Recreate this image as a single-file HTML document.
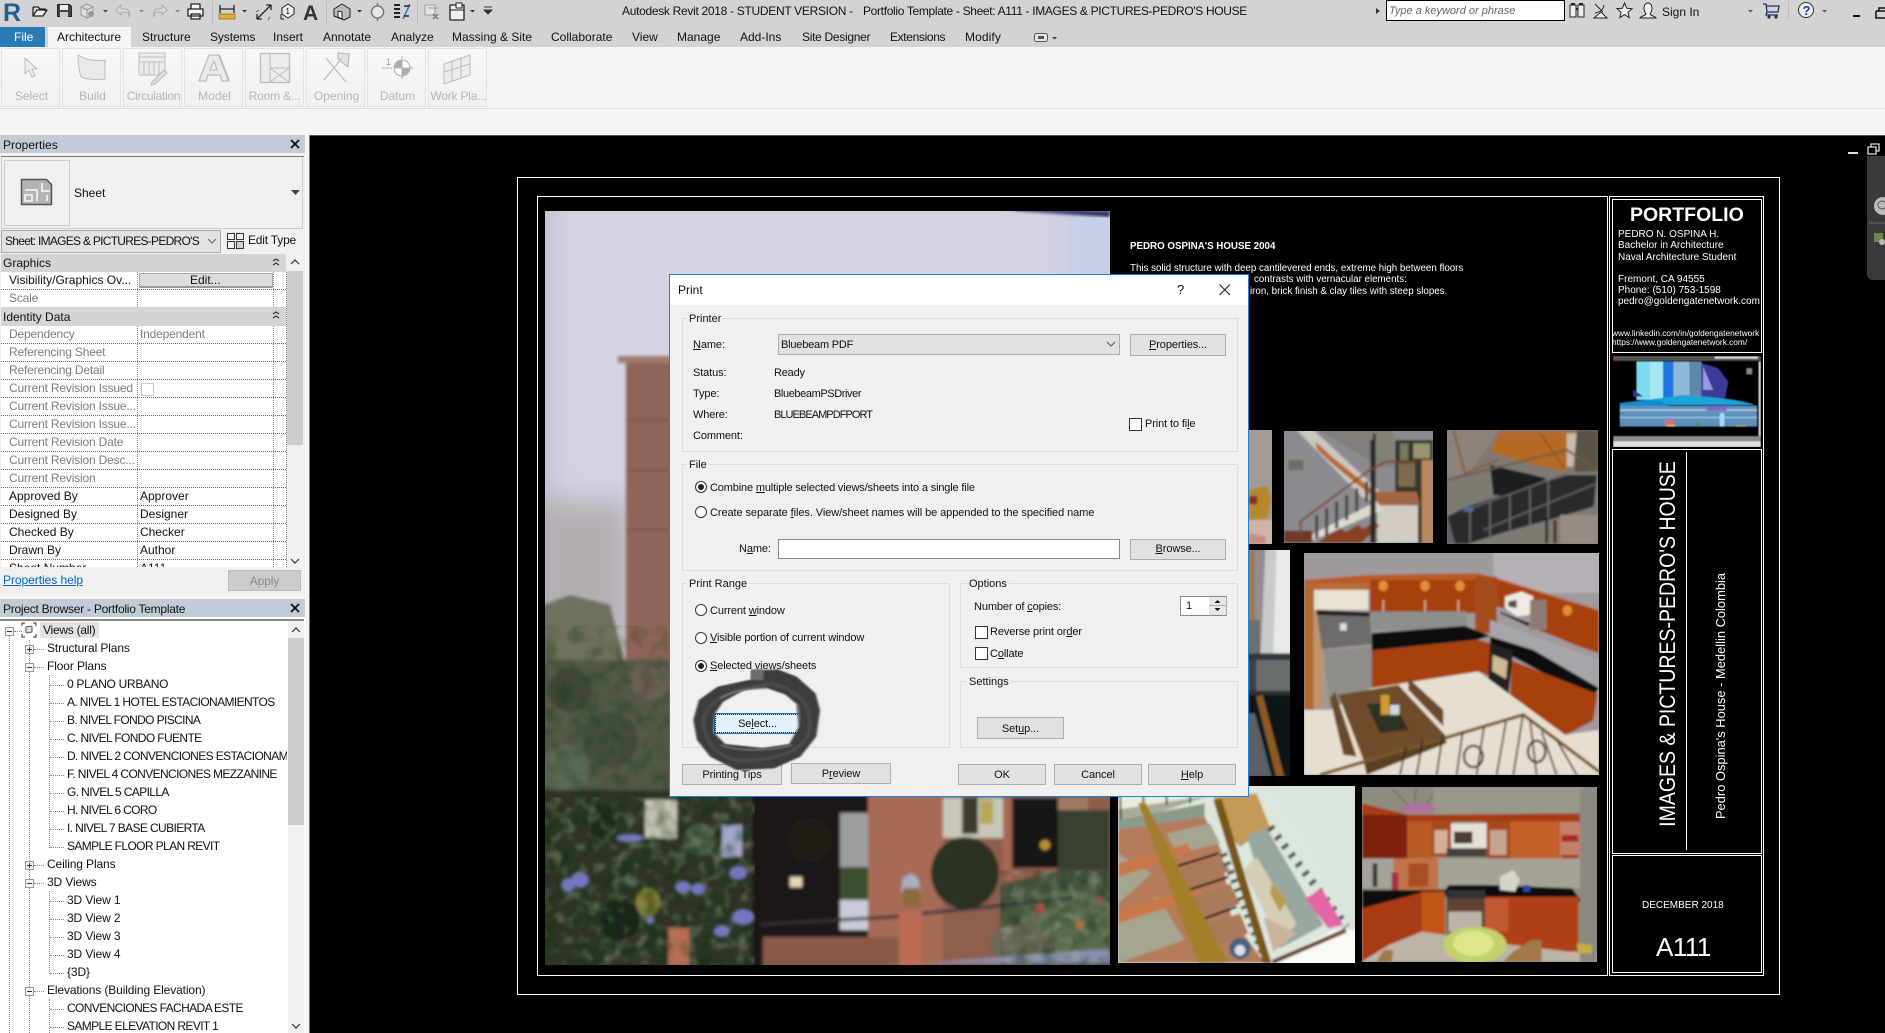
<!DOCTYPE html>
<html><head><meta charset="utf-8"><title>Revit Print Dialog</title>
<style>
html,body{margin:0;padding:0;background:#000}
#p{position:relative;width:1885px;height:1033px;overflow:hidden;background:#000;font:12px "Liberation Sans",sans-serif;color:#111}
#p div,#p span.a,#p svg.a{position:absolute}
.t{position:absolute;white-space:nowrap;line-height:16px;height:16px}
.g{color:#b5b5b5;text-align:center;width:59px;top:88px}
.rb{position:absolute;top:48px;width:59px;height:59px;box-sizing:border-box;border:1px solid #e2e2e2;background:linear-gradient(#f7f7f7,#f1f1f1)}
.hd{background:#bfcddb;left:0;width:305px;height:18px}
.sec{left:1px;width:285px;height:18px;background:#d4d4d4}
.l{border-bottom:1px dotted #666;left:1px;width:285px;height:17px}
.d{color:#7d7d7d;letter-spacing:-.18px}
.tb{font-size:12px}
.b{position:absolute;box-sizing:border-box;background:#e1e1e1;border:1px solid #adadad;text-align:center;font-size:11px;letter-spacing:-.1px;white-space:nowrap}
.dl{font-size:11px;letter-spacing:-.12px}
.gb{position:absolute;box-sizing:border-box;border:1px solid #dcdcdc}
.lg{position:absolute;background:#f0f0f0;padding:0 2px;font-size:11px;line-height:14px;white-space:nowrap}
.rd{position:absolute;width:12px;height:12px;box-sizing:border-box;border:1px solid #333;border-radius:50%;background:#fff}
.rd.on:after{content:"";position:absolute;left:2px;top:2px;width:6px;height:6px;border-radius:50%;background:#222}
.cb{position:absolute;width:13px;height:13px;box-sizing:border-box;border:1px solid #333;background:#fff}
.w{position:absolute;border:1px solid #fff;box-sizing:border-box}
.sw{color:#fff;font-size:10px}
.e{position:absolute;width:9px;height:9px;box-sizing:border-box;border:1px solid #999;background:#f4f4f4}
.e:before{content:"";position:absolute;left:1px;top:3px;width:5px;height:1px;background:#333}
.e.p:after{content:"";position:absolute;left:3px;top:1px;width:1px;height:5px;background:#333}
.tr{font-size:12px;letter-spacing:-.12px}
.up{font-size:12px;letter-spacing:-.62px}
.h{position:absolute;border-top:1px dotted #888}
.v{position:absolute;border-left:1px dotted #888}
</style></head><body><div id="p">

<!-- top chrome -->
<div style="left:0;top:0;width:1885px;height:47px;background:#d3d3d3"></div>
<div style="left:0;top:47px;width:1885px;height:88px;background:#f5f5f5"></div>
<div style="left:0;top:108px;width:1885px;height:1px;background:#dcdcdc"></div>

<svg class="a" style="left:0;top:0" width="520" height="27" viewBox="0 0 520 27" fill="none" stroke-linejoin="round">
<text x="3" y="21" font-family="Liberation Sans" font-weight="bold" font-size="25" fill="#1f5f95">R</text>
<path d="M33 7h5l2 2h5v2M33 7v9h10l4-6H37l-4 6" stroke="#222" stroke-width="1.3" fill="#eee"/>
<path d="M57.500 4.500h12l2 2v10h-14z" fill="#444" stroke="#222"/><rect x="60" y="5" width="8" height="5" fill="#eee"/><rect x="60" y="12" width="8" height="5" fill="#ccc"/>
<path d="M81 7l6-3 6 3v8l-6 3-6-3zM81 7l6 3 6-3M87 10v8" stroke="#999" fill="#ddd"/><circle cx="91" cy="14" r="3" fill="#999"/>
<path d="M103 10h5l-2.500 2.500z" fill="#444"/>
<path d="M121 5l-5 5 5 5v-3h5c2 0 3 2 3 5 1-4 0-8-4-8h-4z" stroke="#aaa" fill="#ddd"/>
<path d="M139 10h5l-2.500 2.500z" fill="#888"/>
<path d="M162 5l5 5-5 5v-3h-5c-2 0-3 2-3 5-1-4 0-8 4-8h4z" stroke="#aaa" fill="#ddd"/>
<path d="M175 10h5l-2.500 2.500z" fill="#888"/>
<path d="M191 4h9v5h-9zM188 9h15v7h-15zM191 14h9v5h-9z" stroke="#222" stroke-width="1.300" fill="#f4f4f4"/>
<path d="M212.500 1v24" stroke="#bbb"/>
<path d="M220 5v8M234 5v8M220 9h14" stroke="#222" stroke-width="1.300"/><rect x="219" y="14" width="16" height="5" fill="#e0b030" stroke="#8a6a10" stroke-width=".7"/>
<path d="M242 10h5l-2.500 2.500z" fill="#333"/>
<path d="M257 19l14-14M257 14v5h5M271 10V5h-5" stroke="#222" stroke-width="1.300"/><path d="M256 12l3-2M268 20l2-3" stroke="#666"/>
<path d="M288 4l6 4v6l-6 4-6-4V8z" stroke="#222" fill="#eee"/><path d="M281 14v5h3" stroke="#222"/><text x="285.500" y="14" font-size="8" font-family="Liberation Sans" fill="#111">1</text>
<text x="303" y="20" font-family="Liberation Sans" font-weight="bold" font-size="21" fill="#333">A</text>
<path d="M326.500 1v24" stroke="#bbb"/>
<path d="M334 9l8-5 8 5v8l-6 3-10-4z" stroke="#222" fill="#bbb"/><path d="M338 11v6l4 2v-7z" fill="#fff" stroke="#222"/>
<path d="M357 10h5l-2.500 2.500z" fill="#333"/>
<path d="M377.500 6a6 6 0 1 0 .1 0zM377.500 3v3M377.500 18v3" stroke="#777" stroke-width="1.500" fill="#e8e8e8"/>
<path d="M394 5h6M394 9h6M394 13h6M394 17h6" stroke="#222" stroke-width="2"/><path d="M410 4l-7 15" stroke="#2a7ad5" stroke-width="1.500"/><path d="M404 6h6M404 16h5" stroke="#222" stroke-width="1.500"/>
<path d="M417.500 1v24" stroke="#bbb"/>
<path d="M425 5h10v10h-10zM428 8h10" stroke="#999" fill="#e5e5e5"/><path d="M433 14l5 5M438 14l-5 5" stroke="#777" stroke-width="1.500"/>
<path d="M450 5h14v15h-14z" stroke="#222" stroke-width="1.300" fill="#eee"/><path d="M450 10h14" stroke="#222"/><path d="M456 3h6v5h-6z" stroke="#222" fill="#fff"/>
<path d="M470 10h5l-2.500 2.500z" fill="#333"/>
<path d="M484 7h8M484 10h8l-4 4z" stroke="#333" fill="#333"/>
</svg>

<div class="t tb" style="left:622px;top:3px;letter-spacing:-.3px">Autodesk Revit 2018 - STUDENT VERSION -</div>
<div class="t tb" style="left:863px;top:3px;letter-spacing:-.33px">Portfolio Template - Sheet: A111 - IMAGES &amp; PICTURES-PEDRO'S HOUSE</div>

<svg class="a" style="left:1370px;top:0" width="515" height="27" viewBox="1370 0 515 27" fill="none">
<path d="M1376 8l4 3-4 3z" fill="#333"/>
<rect x="1570" y="5" width="6" height="12" fill="#eee" stroke="#222"/><rect x="1578" y="5" width="6" height="12" fill="#eee" stroke="#222"/><path d="M1571 4h4M1579 4h4M1576 9h2" stroke="#222" stroke-width="2"/>
<path d="M1595 4l8 8M1604 5c-1 5-4 7-9 8M1594 18h13l-6-6z" stroke="#222" fill="#eee"/>
<path d="M1624.500 3l2.200 5.300 5.300.4-4 3.600 1.200 5.300-4.700-3-4.700 3 1.200-5.300-4-3.600 5.300-.4z" stroke="#222" fill="#eee"/>
<path d="M1648 3c3 0 4 3 4 5s-1 5-2 6c1 2 5 2 6 4h-16c1-2 5-2 6-4-1-1-2-4-2-6s1-5 4-5z" stroke="#222" fill="#eee"/>
<path d="M1748 10h5l-2.500 2.500z" fill="#555"/>
<path d="M1763 4h3l1 8h11l1-6h-12M1767 12l-1 3h12" stroke="#235" stroke-width="1.300" fill="#c8d4e0"/><circle cx="1769" cy="17" r="1.600" fill="#235"/><circle cx="1776" cy="17" r="1.600" fill="#235"/>
<path d="M1788.500 1v18" stroke="#bbb"/>
<circle cx="1806" cy="10" r="7.500" stroke="#333" fill="#eee"/>
<text x="1802.500" y="15" font-size="13" font-weight="bold" font-family="Liberation Sans" fill="#1a3fa8">?</text>
<path d="M1822 10h5l-2.500 2.500z" fill="#555"/>
<path d="M1853 16h7" stroke="#111" stroke-width="2"/><path d="M1876 11h9M1876 11v7h9M1879 11V8h6" stroke="#111" stroke-width="1.500"/>
</svg>
<div style="left:1386px;top:0;width:179px;height:21px;background:#fff;border:1px solid #000;box-sizing:border-box"></div>
<div class="t" style="left:1389px;top:3px;color:#666;font-style:italic;font-size:11px">Type a keyword or phrase</div>
<div class="t tb" style="left:1662px;top:4px">Sign In</div>

<div style="left:0;top:27px;width:45px;height:20px;background:#2a7ab5"></div>
<div style="left:48px;top:27px;width:83px;height:20px;background:#f5f5f5"></div>
<div class="t" style="left:14px;top:29px;color:#fff">File</div>
<div class="t" style="left:57px;top:29px">Architecture</div>
<div class="t" style="left:142px;top:29px">Structure</div>
<div class="t" style="left:210px;top:29px;letter-spacing:-.1px">Systems</div>
<div class="t" style="left:273px;top:29px">Insert</div>
<div class="t" style="left:323px;top:29px">Annotate</div>
<div class="t" style="left:391px;top:29px">Analyze</div>
<div class="t" style="left:452px;top:29px">Massing &amp; Site</div>
<div class="t" style="left:551px;top:29px">Collaborate</div>
<div class="t" style="left:632px;top:29px">View</div>
<div class="t" style="left:677px;top:29px">Manage</div>
<div class="t" style="left:740px;top:29px">Add-Ins</div>
<div class="t" style="left:802px;top:29px;letter-spacing:-.3px">Site Designer</div>
<div class="t" style="left:890px;top:29px;letter-spacing:-.35px">Extensions</div>
<div class="t" style="left:965px;top:29px;letter-spacing:.1px">Modify</div>
<svg class="a" style="left:1032px;top:30px" width="28" height="14" fill="none"><rect x="2.500" y="3.500" width="13" height="8" rx="2" stroke="#555" fill="#e8e8e8"/><rect x="6" y="6" width="6" height="3" fill="#555"/><path d="M20 7h5l-2.500 2.500z" fill="#333"/></svg>

<!-- ribbon buttons -->
<div class="rb" style="left:1px"></div><div class="rb" style="left:62px"></div><div class="rb" style="left:123px"></div><div class="rb" style="left:184px"></div><div class="rb" style="left:245px"></div><div class="rb" style="left:306px"></div><div class="rb" style="left:367px"></div><div class="rb" style="left:428px"></div>
<div class="t g" style="left:2px">Select</div><div class="t g" style="left:63px">Build</div>
<div class="t g" style="left:124px;letter-spacing:-.3px">Circulation</div><div class="t g" style="left:185px">Model</div>
<div class="t g" style="left:245px;letter-spacing:-.2px">Room &amp;...</div><div class="t g" style="left:307px">Opening</div>
<div class="t g" style="left:368px">Datum</div><div class="t g" style="left:429px;letter-spacing:-.2px">Work Pla...</div>
<svg class="a" style="left:0;top:48px" width="490" height="40" fill="none" stroke="#bcbcbc" stroke-linejoin="round">
<path d="M25 10v16l4-4 3 7 3-1-3-7h5z" fill="#eee"/>
<path d="M78 7c10 6 18 6 27 5v19c-9 1-17 1-24-2-2-6-3-15-3-22z" fill="#e9e9e9"/>
<path d="M139 9h26v18h-26zM139 14h26M144 14v13M149 14v13M154 14v13M159 14v13M139 5h26v4h-26z" fill="#ececec"/><path d="M152 34l12-12 3 3-12 11-4 1z" fill="#ddd"/>
<path d="M199 33l10-26h10l10 26h-7l-2-6h-12l-2 6zM210 22h7l-3-9z" fill="#eaeaea" stroke-width="1.300"/><path d="M219 7l10 26" stroke-width="2"/>
<rect x="260.500" y="5.500" width="29" height="29" fill="#ececec" stroke-width="1.300"/><path d="M270 5v29M270 20h19M270 20l19 14M289 20l-19 14"/>
<path d="M324 32l18-22M326 10l20 24M338 5l11 1-1 13-10-8z" stroke-width="1.300" fill="#e2e2e2"/>
<circle cx="402" cy="20" r="8" fill="#fff" stroke="#aaa"/><path d="M402 20h-8a8 8 0 0 1 8-8zM402 20h8a8 8 0 0 1-8 8z" fill="#aaa"/><path d="M382 20h10M402 8v24M410 20h3" stroke="#aaa" stroke-dasharray="3 1"/><text x="386" y="17" font-size="9" fill="#999" stroke="none" font-family="Liberation Sans">1</text>
<path d="M444 16l26-9v20l-26 9zM452 13v20M461 10v20M444 24l26-8" fill="#ececec"/>
</svg>

<!-- left panels -->
<div style="left:0;top:135px;width:305px;height:460px;background:#f0f0f0"></div>
<div style="left:0;top:595px;width:310px;height:4px;background:#f5f5f5"></div>
<div style="left:305px;top:135px;width:5px;height:898px;background:#f5f5f5"></div>
<div style="left:309px;top:135px;width:1px;height:898px;background:#777"></div>
<div class="hd" style="top:135px"></div>
<div class="t" style="left:3px;top:137px">Properties</div>
<svg class="a" style="left:290px;top:139px" width="11" height="11" fill="none" stroke="#111" stroke-width="1.800"><path d="M1 1l8 8M9 1l-8 8"/></svg>
<div style="left:1px;top:156px;width:303px;height:1px;background:#777"></div>
<div style="left:1px;top:157px;width:302px;height:72px;box-sizing:border-box;border:1px solid #ccc;border-top:0"></div>
<div style="left:4px;top:160px;width:66px;height:66px;box-sizing:border-box;border:1px solid #ccc"></div>
<svg class="a" style="left:20px;top:177px" width="34" height="32" fill="none"><path d="M1.500 2.500h25l5 5v20h-30z" fill="#b4b4b4" stroke="#555" stroke-width="1.500"/><path d="M5 13h12v11M5 18h7v6H5zM22 6v8h8M27 18v6" stroke="#f0f0f0" stroke-width="1.800"/></svg>
<div class="t" style="left:74px;top:185px">Sheet</div>
<svg class="a" style="left:291px;top:190px" width="10" height="6"><path d="M0 0h9l-4.500 5z" fill="#444"/></svg>
<div style="left:1px;top:230px;width:220px;height:23px;box-sizing:border-box;background:#e2e2e2;border:1px solid #aaa"></div>
<div class="t" style="left:5px;top:233px;letter-spacing:-.72px">Sheet: IMAGES &amp; PICTURES-PEDRO'S</div>
<svg class="a" style="left:207px;top:238px" width="10" height="7" fill="none"><path d="M1 1l4 4 4-4" stroke="#666"/></svg>
<svg class="a" style="left:226px;top:231px" width="20" height="20" fill="none" stroke="#333"><path d="M1.500 2.500h7v6h-7zM10.500 2.500h7v6h-7zM1.500 10.500h7v7h-7z"/><path d="M10.500 10.500h7v7h-7z" fill="#c8d4e0"/></svg>
<div class="t" style="left:248px;top:232px;letter-spacing:-.2px">Edit Type</div>

<!-- grid -->
<div style="left:1px;top:254px;width:285px;height:313px;background:#fff"></div>
<div class="v" style="left:137px;top:272px;height:295px"></div>
<div class="v" style="left:273px;top:272px;height:295px"></div>
<div class="v" style="left:286px;top:272px;height:295px"></div>
<div class="sec" style="top:254px"></div><div class="t" style="left:3px;top:255px">Graphics</div>
<div class="l" style="top:272px"></div><div class="t" style="left:9px;top:272px">Visibility/Graphics Ov...</div>
<div style="left:139px;top:273px;width:134px;height:15px;box-sizing:border-box;background:#dcdcdc;border:1px solid #aaa;border-bottom:2px solid #999"></div><div class="t" style="left:190px;top:272px">Edit...</div>
<div class="l" style="top:290px"></div><div class="t d" style="left:9px;top:290px">Scale</div>
<div class="sec" style="top:307px;height:19px"></div><div class="t" style="left:3px;top:309px">Identity Data</div>
<div class="l" style="top:326px"></div><div class="t d" style="left:9px;top:326px">Dependency</div><div class="t d" style="left:140px;top:326px">Independent</div>
<div class="l" style="top:344px"></div><div class="t d" style="left:9px;top:344px">Referencing Sheet</div>
<div class="l" style="top:362px"></div><div class="t d" style="left:9px;top:362px">Referencing Detail</div>
<div class="l" style="top:380px"></div><div class="t d" style="left:9px;top:380px">Current Revision Issued</div>
<div style="left:141px;top:383px;width:13px;height:13px;box-sizing:border-box;border:1px solid #ccc"></div>
<div class="l" style="top:398px"></div><div class="t d" style="left:9px;top:398px">Current Revision Issue...</div>
<div class="l" style="top:416px"></div><div class="t d" style="left:9px;top:416px">Current Revision Issue...</div>
<div class="l" style="top:434px"></div><div class="t d" style="left:9px;top:434px">Current Revision Date</div>
<div class="l" style="top:452px"></div><div class="t d" style="left:9px;top:452px">Current Revision Desc...</div>
<div class="l" style="top:470px"></div><div class="t d" style="left:9px;top:470px">Current Revision</div>
<div class="l" style="top:488px"></div><div class="t" style="left:9px;top:488px">Approved By</div><div class="t" style="left:140px;top:488px">Approver</div>
<div class="l" style="top:506px"></div><div class="t" style="left:9px;top:506px">Designed By</div><div class="t" style="left:140px;top:506px">Designer</div>
<div class="l" style="top:524px"></div><div class="t" style="left:9px;top:524px">Checked By</div><div class="t" style="left:140px;top:524px">Checker</div>
<div class="l" style="top:542px"></div><div class="t" style="left:9px;top:542px">Drawn By</div><div class="t" style="left:140px;top:542px">Author</div>
<div class="t" style="left:9px;top:560px">Sheet Number</div><div class="t" style="left:140px;top:560px">A111</div>
<div style="left:0;top:567px;width:305px;height:28px;background:#f0f0f0"></div>
<div style="left:287px;top:254px;width:16px;height:314px;background:#f0f0f0"></div>
<div style="left:287px;top:271px;width:16px;height:174px;background:#cdcdcd"></div>
<svg class="a" style="left:270px;top:255px" width="34" height="312" fill="none" stroke="#333"><path d="M3 6l3-2 3 2M3 10l3-2 3 2M21 9l4-4 4 4" stroke-width="1.200"/><path d="M21 304l4 4 4-4" stroke-width="1.200"/><path d="M3 59l3-2 3 2M3 63l3-2 3 2" stroke-width="1.200"/></svg>
<div class="t" style="left:3px;top:572px;color:#0066cc;text-decoration:underline;letter-spacing:-.05px">Properties help</div>
<div class="b" style="left:228px;top:570px;width:73px;height:21px;background:#ccc;color:#8a8a8a;font-size:12px;line-height:20px;border-color:#bbb">Apply</div>

<div class="hd" style="top:599px"></div>
<div class="t" style="left:3px;top:601px;letter-spacing:-.25px">Project Browser - Portfolio Template</div>
<svg class="a" style="left:290px;top:603px" width="11" height="11" fill="none" stroke="#111" stroke-width="1.800"><path d="M1 1l8 8M9 1l-8 8"/></svg>
<div style="left:0;top:617px;width:305px;height:416px;background:#fff"></div>
<div style="left:0;top:619px;width:304px;height:2px;background:#888"></div>
<div style="left:288px;top:621px;width:16px;height:412px;background:#f0f0f0"></div>
<div style="left:288px;top:638px;width:16px;height:187px;background:#cdcdcd"></div>
<svg class="a" style="left:288px;top:621px" width="16" height="412" fill="none" stroke="#333" stroke-width="1.200"><path d="M4 11l4-4 4 4M4 403l4 4 4-4"/></svg>

<div class="v" style="left:9px;top:636px;height:397px"></div>
<div class="v" style="left:29px;top:640px;height:393px"></div>
<div class="v" style="left:49px;top:675px;height:173px"></div>
<div class="v" style="left:49px;top:891px;height:83px"></div>
<div class="v" style="left:49px;top:999px;height:34px"></div>
<div class="h" style="left:14px;top:631px;width:8px"></div>
<div class="h" style="left:34px;top:649px;width:10px"></div><div class="h" style="left:34px;top:667px;width:10px"></div><div class="h" style="left:34px;top:865px;width:10px"></div><div class="h" style="left:34px;top:883px;width:10px"></div><div class="h" style="left:34px;top:991px;width:10px"></div>
<div class="h" style="left:50px;top:685px;width:14px"></div><div class="h" style="left:50px;top:703px;width:14px"></div><div class="h" style="left:50px;top:721px;width:14px"></div><div class="h" style="left:50px;top:739px;width:14px"></div><div class="h" style="left:50px;top:757px;width:14px"></div><div class="h" style="left:50px;top:775px;width:14px"></div><div class="h" style="left:50px;top:793px;width:14px"></div><div class="h" style="left:50px;top:811px;width:14px"></div><div class="h" style="left:50px;top:829px;width:14px"></div><div class="h" style="left:50px;top:847px;width:14px"></div>
<div class="h" style="left:50px;top:901px;width:14px"></div><div class="h" style="left:50px;top:919px;width:14px"></div><div class="h" style="left:50px;top:937px;width:14px"></div><div class="h" style="left:50px;top:955px;width:14px"></div><div class="h" style="left:50px;top:973px;width:14px"></div>
<div class="h" style="left:50px;top:1009px;width:14px"></div><div class="h" style="left:50px;top:1027px;width:14px"></div>
<div class="e" style="left:5px;top:627px"></div>
<div class="e p" style="left:25px;top:645px"></div><div class="e" style="left:25px;top:663px"></div><div class="e p" style="left:25px;top:861px"></div><div class="e" style="left:25px;top:879px"></div><div class="e" style="left:25px;top:987px"></div>
<svg class="a" style="left:21px;top:622px" width="16" height="16" fill="none" stroke="#333"><path d="M1 4V1h3M12 1h3v3M1 12v3h3M15 12v3h-3"/><path d="M5 5l5-1 1 1v5l-5 1-1-1z" fill="#ddd" stroke="#555"/></svg>
<div style="left:40px;top:622px;width:59px;height:16px;background:#e2e2e2"></div>
<div class="t tr" style="left:43px;top:622px;letter-spacing:-.25px">Views (all)</div>
<div class="t tr" style="left:47px;top:640px">Structural Plans</div>
<div class="t tr" style="left:47px;top:658px">Floor Plans</div>
<div class="t up" style="left:67px;top:676px;letter-spacing:-.3px">0 PLANO URBANO</div>
<div class="t up" style="left:67px;top:694px">A. NIVEL 1 HOTEL ESTACIONAMIENTOS</div>
<div class="t up" style="left:67px;top:712px">B. NIVEL FONDO PISCINA</div>
<div class="t up" style="left:67px;top:730px">C. NIVEL FONDO FUENTE</div>
<div class="t up" style="left:67px;top:748px;width:220px;overflow:hidden">D. NIVEL 2 CONVENCIONES ESTACIONAMIENTOS</div>
<div class="t up" style="left:67px;top:766px">F. NIVEL 4 CONVENCIONES MEZZANINE</div>
<div class="t up" style="left:67px;top:784px">G. NIVEL 5 CAPILLA</div>
<div class="t up" style="left:67px;top:802px">H. NIVEL 6 CORO</div>
<div class="t up" style="left:67px;top:820px">I. NIVEL 7 BASE CUBIERTA</div>
<div class="t up" style="left:67px;top:838px">SAMPLE FLOOR PLAN REVIT</div>
<div class="t tr" style="left:47px;top:856px">Ceiling Plans</div>
<div class="t tr" style="left:47px;top:874px">3D Views</div>
<div class="t tr" style="left:67px;top:892px">3D View 1</div>
<div class="t tr" style="left:67px;top:910px">3D View 2</div>
<div class="t tr" style="left:67px;top:928px">3D View 3</div>
<div class="t tr" style="left:67px;top:946px">3D View 4</div>
<div class="t tr" style="left:67px;top:964px">{3D}</div>
<div class="t tr" style="left:47px;top:982px">Elevations (Building Elevation)</div>
<div class="t up" style="left:67px;top:1000px">CONVENCIONES FACHADA ESTE</div>
<div class="t up" style="left:67px;top:1018px">SAMPLE ELEVATION REVIT 1</div>

<!-- canvas -->
<div style="left:310px;top:135px;width:1575px;height:898px;background:#000;border-top:1px solid #555;box-sizing:border-box"></div>
<div class="w" style="left:517px;top:177px;width:1263px;height:818px"></div>
<div class="w" style="left:537px;top:196px;width:1071px;height:780px"></div>
<div class="w" style="left:1609px;top:196px;width:155px;height:780px"></div>
<div class="w" style="left:1612px;top:199px;width:150px;height:154px"></div>
<div class="w" style="left:1612px;top:449px;width:150px;height:405px"></div>
<div class="w" style="left:1612px;top:855px;width:150px;height:118px"></div>
<div style="left:1686px;top:452px;width:1px;height:398px;background:#fff"></div>

<div class="t" style="left:1630px;top:205px;color:#fff;font-weight:bold;font-size:19.500px;line-height:20px;height:20px">PORTFOLIO</div>
<div class="t sw" style="left:1618px;top:227px">PEDRO N. OSPINA H.</div>
<div class="t sw" style="left:1618px;top:238px">Bachelor in Architecture</div>
<div class="t sw" style="left:1618px;top:250px">Naval Architecture Student</div>
<div class="t sw" style="left:1618px;top:272px">Fremont, CA 94555</div>
<div class="t sw" style="left:1618px;top:283px">Phone: (510) 753-1598</div>
<div class="t sw" style="left:1618px;top:294px">pedro@goldengatenetwork.com</div>
<div class="t sw" style="left:1612px;top:325px;font-size:8.300px">www.linkedin.com/in/goldengatenetwork</div>
<div class="t sw" style="left:1612px;top:334px;font-size:8.300px">https://www.goldengatenetwork.com/</div>
<div class="t" style="left:1668px;top:644px;color:#fff;font-size:19.500px;line-height:20px;height:20px;transform:translate(-50%,-50%) rotate(-90deg) scaleY(1.150)">IMAGES &amp; PICTURES-PEDRO'S HOUSE</div>
<div class="t" style="left:1721px;top:696px;color:#fff;font-size:12.900px;transform:translate(-50%,-50%) rotate(-90deg)">Pedro Ospina's House - Medellin Colombia</div>
<div class="t" style="left:1642px;top:896px;color:#fff;font-size:10px;margin-top:2px">DECEMBER 2018</div>
<div class="t" style="left:1656px;top:932px;color:#fff;font-size:26px;line-height:30px;height:30px;letter-spacing:-.5px">A111</div>

<div class="t" style="left:1130px;top:239px;color:#fff;font-weight:bold;font-size:9.750px">PEDRO OSPINA'S HOUSE 2004</div>
<div class="t" style="left:1130px;top:261px;color:#fff;font-size:9.750px">This solid structure with deep cantilevered ends, extreme high between floors</div>
<div class="t" style="left:1254px;top:272px;color:#fff;font-size:9.750px">contrasts with vernacular elements:</div>
<div class="t" style="left:1250px;top:284px;color:#fff;font-size:9.750px">iron, brick finish &amp; clay tiles with steep slopes.</div>

<!-- nav bar -->
<svg class="a" style="left:1845px;top:140px" width="40" height="145" fill="none">
<path d="M3 13h10" stroke="#ddd" stroke-width="2"/><path d="M23 7h8v7h-8zM26 7V4h8v7h-3" stroke="#ddd" stroke-width="1.300"/>
<path d="M40 16h-18v118a6 6 0 0 0 6 6h12z" fill="#3a3a3a"/>
<circle cx="38" cy="66" r="9" fill="#bbb"/><circle cx="37" cy="65" r="4" stroke="#555"/>
<path d="M24 83h16" stroke="#666"/>
<rect x="29" y="93" width="9" height="9" fill="#6a8a4a"/><circle cx="37" cy="102" r="3" fill="#bbb"/>
</svg>

<!-- photo filters -->
<svg width="0" height="0" class="a"><defs>
<filter id="bl" x="-5%" y="-5%" width="110%" height="110%"><feGaussianBlur stdDeviation="3.500"/></filter>
<filter id="bh" x="-5%" y="-5%" width="110%" height="110%"><feGaussianBlur stdDeviation="1.500"/></filter>
<filter id="bs" x="-10%" y="-10%" width="120%" height="120%"><feGaussianBlur stdDeviation="14"/></filter>
<filter id="nd" x="0" y="0" width="100%" height="100%"><feTurbulence type="fractalNoise" baseFrequency=".07" numOctaves="2" seed="4"/><feColorMatrix values="0 0 0 0 0  0 0 0 0 .03  0 0 0 0 0  2.600 0 0 0 -1.100"/><feGaussianBlur stdDeviation="1.200"/></filter>
<filter id="nl" x="0" y="0" width="100%" height="100%"><feTurbulence type="fractalNoise" baseFrequency=".08" numOctaves="2" seed="9"/><feColorMatrix values="0 0 0 0 .38  0 0 0 0 .44  0 0 0 0 .32  0 2.600 0 0 -1.250"/><feGaussianBlur stdDeviation="1.200"/></filter>
</defs></svg>

<!-- House photo -->
<svg class="a" style="left:545px;top:211px" width="565" height="754" viewBox="545 211 565 754">
<g filter="url(#bs)">
<rect x="500" y="180" width="640" height="520" fill="#d5d3e3"/>
<rect x="500" y="180" width="50" height="450" fill="#bcbbcc"/>
<rect x="1060" y="190" width="80" height="110" fill="#c9cde8"/>
<rect x="530" y="500" width="100" height="160" fill="#b4aeb2"/>
</g>
<path d="M1000 208l110 3v6l-90-6z" fill="#2a2a60" filter="url(#bh)"/>
<g filter="url(#bh)">
<rect x="626" y="360" width="46" height="300" fill="#8e6558"/>
<rect x="618" y="356" width="54" height="7" fill="#a27a6c"/>
<path d="M626 420h46M626 470h46M626 530h46" stroke="#7a5346" stroke-width="2"/>
<path d="M530 610l40-15 40 10 15 60v30H530z" fill="#70715f"/>
<rect x="530" y="660" width="145" height="150" fill="#525a46"/>
<circle cx="570" cy="690" r="22" fill="#3f4a38"/><circle cx="610" cy="740" r="28" fill="#454d3c"/><circle cx="650" cy="680" r="20" fill="#6a5f52"/><circle cx="565" cy="770" r="25" fill="#5a6754"/>
<rect x="530" y="790" width="230" height="190" fill="#2f3425"/>
<rect x="752" y="790" width="118" height="190" fill="#1d1813"/>
<rect x="840" y="813" width="29" height="54" fill="#9c9d9f"/><rect x="840" y="867" width="29" height="33" fill="#3d5030"/><rect x="840" y="900" width="29" height="30" fill="#c8ccd8"/>
<rect x="868" y="790" width="80" height="190" fill="#a66a55"/>
<rect x="943" y="790" width="170" height="190" fill="#8d5f4d"/>
<rect x="943" y="798" width="60" height="40" fill="#c8c8b8"/><rect x="962" y="798" width="16" height="36" fill="#3e3a2e"/><rect x="980" y="800" width="13" height="24" fill="#b6a858"/>
<rect x="1003" y="798" width="9" height="82" fill="#a9684f"/>
<rect x="1012" y="798" width="46" height="70" fill="#191613"/>
<rect x="1058" y="798" width="30" height="12" fill="#a07a60"/>
<rect x="1058" y="810" width="52" height="155" fill="#394030"/>
<ellipse cx="965" cy="873" rx="34" ry="36" fill="#2b3322"/>
<path d="M1000 885l60-15 60 0v100h-120z" fill="#4a5540"/><ellipse cx="1070" cy="925" rx="50" ry="35" fill="#5d6a50"/><ellipse cx="1020" cy="945" rx="30" ry="20" fill="#6b6858"/>
<rect x="763" y="937" width="136" height="30" fill="#8a5a48"/>
<rect x="668" y="928" width="21" height="38" fill="#b86c52"/><rect x="899" y="912" width="23" height="54" fill="#bb6c52"/>
<path d="M901 892h20l-3-14-7-5-8 5z" fill="#a8b0c0"/><rect x="903" y="888" width="17" height="18" fill="#8a6a3a"/>
<rect x="790" y="877" width="12" height="10" fill="#e6d8b8"/>
<rect x="722" y="825" width="20" height="32" fill="#a6a5d0"/>
<rect x="645" y="800" width="32" height="38" fill="#c8c4b6"/>
<ellipse cx="648" cy="902" rx="12" ry="14" fill="#8a8030"/>
<circle cx="600" cy="820" r="16" fill="#23291d"/><circle cx="620" cy="920" r="20" fill="#1f261a"/><circle cx="700" cy="840" r="16" fill="#4a5a42"/>
<circle cx="810" cy="840" r="22" fill="#241f19"/>
<path d="M760 923l139-8v3l-139 8z" fill="#303236"/>
<path d="M922 912l150-15v3l-150 15z" fill="#2e3240"/><path d="M925 963l155-12 30-2v14z" fill="#8d8fb0"/>
</g>
<rect x="545" y="625" width="124" height="172" filter="url(#nd)" opacity=".3"/>
<rect x="545" y="797" width="210" height="168" filter="url(#nd)" opacity=".4"/>
<rect x="545" y="797" width="210" height="168" filter="url(#nl)" opacity=".45"/>
<rect x="1000" y="870" width="110" height="95" filter="url(#nd)" opacity=".4"/>
<rect x="1000" y="870" width="110" height="95" filter="url(#nl)" opacity=".45"/>
<g filter="url(#bh)" fill="#7576bd">
<ellipse cx="580" cy="880" rx="9" ry="8"/><ellipse cx="568" cy="885" rx="7" ry="7"/><ellipse cx="683" cy="887" rx="8" ry="6"/><ellipse cx="698" cy="889" rx="7" ry="6"/><ellipse cx="738" cy="873" rx="9" ry="7"/><ellipse cx="743" cy="917" rx="11" ry="8"/><ellipse cx="722" cy="931" rx="8" ry="6"/><ellipse cx="630" cy="838" rx="14" ry="4"/><ellipse cx="650" cy="920" rx="4" ry="4"/></g>
<g filter="url(#bh)"><circle cx="1045" cy="845" r="6" fill="#b88a30"/><circle cx="1040" cy="908" r="5" fill="#b04a3c"/><circle cx="1080" cy="925" r="4" fill="#b86c3c"/><circle cx="1100" cy="900" r="3" fill="#b04a3c"/></g>
</svg>

<!-- A -->
<svg class="a" style="left:1249px;top:430px" width="23" height="114" viewBox="447 30 69 342">
<g filter="url(#bl)"><rect x="440" y="20" width="90" height="360" fill="#a29c96"/>
<path d="M447 210l55-15 14 40-14 60-55 10z" fill="#b4892f"/><rect x="447" y="228" width="25" height="25" fill="#8e2a20"/>
<rect x="440" y="300" width="80" height="80" fill="#cdb5aa"/><path d="M447 340l50 10v22h-50z" fill="#c98d80"/></g></svg>

<!-- B stairs -->
<svg class="a" style="left:1284px;top:431px" width="149" height="112" viewBox="552 33 447 336">
<g filter="url(#bl)"><rect x="540" y="20" width="470" height="360" fill="#8c8b90"/>
<path d="M640 20h240v120l-40 0z" fill="#827e78"/>
<path d="M585 25l50 0 205 190 15 45-70-30z" fill="#cbc6c0"/>
<path d="M645 65l22 18 30 28 32 26 32 26 30 25 28 24-12 10-30-25-32-26-32-26-30-26-30-28z" fill="#b86a36"/>
<rect x="885" y="60" width="114" height="310" fill="#38342c"/>
<rect x="900" y="70" width="25" height="50" fill="#7a7a5e"/><rect x="940" y="70" width="50" height="45" fill="#9a9470"/><rect x="965" y="120" width="34" height="250" fill="#b98a5e"/><rect x="895" y="130" width="50" height="70" fill="#7d6a50"/>
<path d="M825 215h125l10 40-135 5z" fill="#a46644"/>
<rect x="832" y="256" width="122" height="113" fill="#d2ccc4"/>
<path d="M620 369l230-100-20-25-215 110z" fill="#ded8ce"/>
<path d="M650 369l70-45 18 12 35-22 18 12 30-20 18 10-55 53z" fill="#8a3f22"/>
<rect x="552" y="332" width="85" height="37" fill="#6d3b28"/>
<path d="M815 369V60M823 369V40" stroke="#2c2a28" stroke-width="8"/>
<path d="M605 345l-5-40 20-15 190-140 50-25h90" stroke="#7a4a2c" stroke-width="6" fill="none"/>
<path d="M650 285v70M680 265v85M710 245v80M740 225v75M770 205v70M800 185v60" stroke="#4a4540" stroke-width="9" fill="none"/>
<path d="M565 120h45v30h-45z" fill="#6f6a60"/></g></svg>

<!-- C stairs -->
<svg class="a" style="left:1447px;top:430px" width="151" height="114" viewBox="1041 30 453 342">
<g filter="url(#bl)"><rect x="1030" y="20" width="480" height="360" fill="#7f7973"/>
<path d="M1030 20h175l-90 130-85 30z" fill="#8c837a"/><path d="M1060 30l35 130 100-40" stroke="#8a5a30" stroke-width="6" fill="none"/>
<path d="M1200 35h225l-25 120-120-25-110-35z" fill="#b46a20"/><path d="M1320 40l70 100" stroke="#8c4e18" stroke-width="4"/>
<path d="M1400 40h30l-10 100-20 0z" fill="#c7bcae"/>
<path d="M1430 30h64v125h-70z" fill="#5a5246"/>
<path d="M1170 135l110 25 60 15-70 60-90-10z" fill="#1e1e20"/>
<path d="M1041 290l60-30 300-95 90 0-10 95-100 30-180 50-100 32h-60z" fill="#29292c"/>
<path d="M1380 285h114v87h-114z" fill="#958d84"/><path d="M1041 280l25 92h-25z" fill="#5c5f66"/>
<path d="M1041 180l360-90 90 60" stroke="#6e5c48" stroke-width="6" fill="none"/>
<path d="M1100 270l300-110M1150 330l340-140" stroke="#6c6c68" stroke-width="4" fill="none"/>
<path d="M1110 265v100M1170 245v110M1230 225v105M1290 205v110M1345 185v110" stroke="#6c6a66" stroke-width="5"/>
<path d="M1340 300v70M1365 300v70" stroke="#2b2723" stroke-width="8"/>
<path d="M1090 260h30v15h-30z" fill="#4d6c98"/></g></svg>

<!-- D -->
<svg class="a" style="left:1249px;top:550px" width="41" height="226" viewBox="447 390 123 678">
<g filter="url(#bl)"><rect x="440" y="380" width="140" height="700" fill="#c9cbc9"/>
<rect x="440" y="380" width="27" height="220" fill="#9a7a58"/>
<path d="M467 380h30l-15 320h-15z" fill="#8e9090"/><path d="M530 380h50v320h-60z" fill="#e8eaea"/>
<rect x="440" y="600" width="40" height="100" fill="#6a6f6a"/>
<rect x="440" y="700" width="140" height="20" fill="#30363c"/>
<rect x="440" y="720" width="140" height="100" fill="#6a6e6a"/><rect x="447" y="720" width="22" height="100" fill="#3a3f45"/>
<rect x="440" y="812" width="140" height="12" fill="#2c3036"/>
<rect x="440" y="824" width="140" height="250" fill="#0f1214"/>
<path d="M440 880l25 0 50 190h-75z" fill="#5a6066"/>
<path d="M468 830l20-5 65 245h-25z" fill="#8c5a28"/></g></svg>

<!-- E kitchen -->
<svg class="a" style="left:1304px;top:553px" width="295" height="222" viewBox="612 400 885 665">
<g filter="url(#bl)"><rect x="600" y="390" width="910" height="690" fill="#a09a9c"/>
<rect x="1180" y="390" width="330" height="130" fill="#b4b0b6"/>
<path d="M612 480l200-15 320-5 60 15 305 95v30l-305-90H612z" fill="#b85c28"/>
<rect x="612" y="490" width="200" height="20" fill="#b56c38"/>
<rect x="640" y="510" width="165" height="60" fill="#e8e2d2"/><rect x="612" y="500" width="30" height="380" fill="#ad6a36"/><rect x="640" y="570" width="30" height="290" fill="#c09468"/>
<rect x="810" y="480" width="320" height="100" fill="#a6400c"/>
<ellipse cx="850" cy="498" rx="14" ry="16" fill="#e09030"/><ellipse cx="975" cy="498" rx="14" ry="16" fill="#e09030"/><ellipse cx="1080" cy="498" rx="14" ry="16" fill="#e09030"/>
<path d="M850 540v40M975 540v40M1075 540v40" stroke="#c9b7a0" stroke-width="5"/>
<rect x="1125" y="470" width="65" height="170" fill="#a34d1c"/>
<path d="M1190 480l307 95v125l-60-20-147-60v-30l-100-30z" fill="#a6400c"/>
<ellipse cx="1402" cy="572" rx="14" ry="16" fill="#e09030"/>
<path d="M1215 530l50-15 35 15-5 55-45 5-35-25z" fill="#eeeae6"/><path d="M1225 545l25-5v25l-25-5z" fill="#5a4a44"/>
<path d="M1200 575l90 35-5 10-85-40z" fill="#2a2a2a"/>
<rect x="1290" y="540" width="50" height="90" fill="#8f7a74"/>
<rect x="815" y="575" width="285" height="55" fill="#8e8e8a"/>
<path d="M1170 600l327 120v100l-207-130-120-45z" fill="#a6a6aa"/>
<path d="M815 640l280-22 75 30-40 12-315 32z" fill="#0c0c0c"/>
<path d="M815 692l320-32 35 10v100l-35-15-320 50z" fill="#a6400f"/>
<path d="M1170 650l130 40 197 115-15 20-95-35-150-80-67-30z" fill="#0e0e0e"/>
<path d="M1235 722l257 100-12 80-85 45-165-105z" fill="#a6400f"/>
<path d="M1170 670l70 22-15 135-60-42z" fill="#232323"/><path d="M1178 705l45 18-5 55-42-25z" fill="#cdb992"/>
<path d="M650 570l160 8 5 95-150 15z" fill="#6e6c6a"/><path d="M650 570l160 8v12l-160-5z" fill="#23221f"/>
<path d="M670 692l145-12v120l-125 70z" fill="#8f8d8a"/>
<rect x="720" y="610" width="20" height="22" fill="#ddd"/>
<path d="M612 870h78l125-65 320-50 260 190 102-15v135H612z" fill="#e6dfcf"/>
<path d="M705 815l65 195-40-5-40-170z" fill="#6b4a2c"/>
<path d="M715 825l180-30 140 150-245 75z" fill="#6f4c2c"/>
<path d="M800 852l85-2 40 80-85 10z" fill="#2f3322"/><rect x="842" y="825" width="26" height="60" fill="#d49a30"/><rect x="870" y="855" width="28" height="30" fill="#d0d8e6"/>
<path d="M925 775l105 95v50l-105-110z" fill="#6b4a2c"/>
<path d="M790 1020l245-75 5 25-240 95z" fill="#5a3f24"/>
<path d="M660 1065l610-180 227 170" fill="none" stroke="#7a5828" stroke-width="10"/>
<path d="M900 1065l18-85M950 1065l18-105M1010 1065l18-120M1070 1065l18-130M1130 1065l22-145M1190 1065l28-160M1240 1065l28-175M1310 1065l-20-165M1370 1065l-45-130M1430 1065l-60-105" stroke="#2a2622" stroke-width="5" fill="none"/>
<ellipse cx="1120" cy="1010" rx="28" ry="32" fill="none" stroke="#3a3a38" stroke-width="7"/><ellipse cx="1310" cy="995" rx="26" ry="32" fill="none" stroke="#3a3a38" stroke-width="7"/>
</g></svg>

<!-- F stair from above -->
<svg class="a" style="left:1118px;top:786px" width="237" height="177" viewBox="54 18 711 530">
<g filter="url(#bl)"><rect x="40" y="10" width="740" height="550" fill="#dde6dc"/>
<path d="M490 10h290v440l-30 0-130-280z" fill="#d9e4da"/><path d="M700 450h80v110h-290z" fill="#f8faf6"/>
<path d="M54 18h270v30l-270 90z" fill="#a8ad9a"/><path d="M54 18h260v30l-260 40z" fill="#e8ecd8"/><path d="M60 40l3 80M130 30v60M200 20v55M270 20v50" stroke="#4e5444" stroke-width="6"/>
<path d="M54 120l260-50v100l-230 60-30-30z" fill="#8c9a88"/>
<path d="M54 150l260-40 50 100 30 200 100 138H54z" fill="#b47c5a"/>
<path d="M54 220l100 60-100 90zM54 420l120-70 80 130-200 68zM200 160l130-30 30 60-130 30z" fill="#a5a590"/>
<path d="M54 250l210-60 10 30-220 70zM54 390l240-70 10 30-250 80z" fill="#c8784c"/>
<path d="M240 270l120-40 30 40-120 60zM280 350l110-40 30 60-120 50zM320 430l100-30 25 60-90 35z" fill="#a97a5c"/>
<path d="M225 260l130-40M265 330l120-40M300 420l110-40" stroke="#1c1c1c" stroke-width="7"/>
<path d="M340 50l130-10 40 100-90 60-40-40z" fill="#c49a56"/>
<path d="M440 165l60-20 170 290-130 70z" fill="#98a89f"/>
<path d="M430 270l40-40 120 200-50 60z" fill="#d6ceb4"/><path d="M515 310l45 50-20 35-30-55z" fill="#b89c4a"/>
<path d="M490 410l100 50-70 55z" fill="#cbb49c"/>
<path d="M515 540l220-95 5 12-220 95z" fill="#6a4830"/>
<path d="M510 140l230 300" stroke="#4f5a4c" stroke-width="24" fill="none" stroke-dasharray="12 22"/>
<path d="M370 220l130 330" stroke="#494e44" stroke-width="22" stroke-dasharray="10 18" fill="none"/>
<path d="M615 355l50-30 65 110-45 10z" fill="#e466a8"/>
<ellipse cx="420" cy="505" rx="32" ry="32" fill="#47627e"/><ellipse cx="420" cy="510" rx="16" ry="16" fill="#dde"/>
<path d="M115 70l20-5 250 485h-90z" fill="#a37f2a"/>
<path d="M340 60l25-5 150 495h-25z" fill="#7a5618"/>
</g></svg>

<!-- G kitchen -->
<svg class="a" style="left:1362px;top:787px" width="235" height="175" viewBox="786 22 705 523">
<g filter="url(#bl)"><rect x="770" y="10" width="730" height="545" fill="#8e8c7e"/>
<rect x="1000" y="22" width="440" height="90" fill="#999889"/>
<path d="M880 30l60 60M950 22l-10 70M1000 40l-30 50" stroke="#7a5a48" stroke-width="3"/>
<ellipse cx="955" cy="85" rx="50" ry="15" fill="#b070a0"/>
<path d="M786 70l140 35 520-5 30 25H786z" fill="#a83a12"/>
<rect x="786" y="105" width="135" height="132" fill="#7c2410"/>
<rect x="921" y="125" width="75" height="110" fill="#b85a24"/>
<rect x="996" y="125" width="60" height="105" fill="#a8481c"/><rect x="1003" y="150" width="40" height="70" fill="#d4b098"/>
<rect x="1053" y="130" width="108" height="75" fill="#e4e0da"/><rect x="1062" y="155" width="55" height="35" fill="#4d4038"/>
<rect x="1160" y="125" width="70" height="115" fill="#a8481c"/><rect x="1170" y="150" width="50" height="75" fill="#c4a490"/>
<rect x="1230" y="125" width="150" height="118" fill="#c4602a"/>
<rect x="1380" y="125" width="60" height="120" fill="#c4806a"/><rect x="1385" y="165" width="50" height="20" fill="#a62f1c"/><rect x="1385" y="225" width="50" height="20" fill="#a62f1c"/>
<path d="M1445 190l25-25 20 25v50h-45z" fill="#b8654a"/>
<path d="M1040 205h120v25h-120z" fill="#45423e"/><rect x="1078" y="235" width="97" height="20" fill="#222"/>
<rect x="786" y="235" width="95" height="90" fill="#a4a29a"/>
<rect x="880" y="235" width="135" height="95" fill="#c2724a"/><rect x="925" y="250" width="60" height="70" fill="#a84e26"/>
<rect x="1015" y="235" width="425" height="90" fill="#a4a396"/>
<rect x="818" y="250" width="14" height="70" fill="#3a3a3a"/><rect x="875" y="278" width="20" height="55" fill="#a82e48"/>
<path d="M786 330h250l10-15h120l250 10 30 40H1155v-30l-120 15-249 50z" fill="#0a0a0a"/>
<path d="M1040 330h115v30h-115z" fill="#30313a"/><path d="M1040 355h115v115h-115z" fill="#5e4230"/><path d="M1045 395h100v60h-100z" fill="#bcb4a8"/><rect x="1040" y="455" width="115" height="25" fill="#777"/>
<path d="M786 385l180-48v125l-100 50-80 30z" fill="#a83a14"/>
<rect x="965" y="335" width="70" height="130" fill="#c05418"/>
<rect x="1155" y="350" width="280" height="165" fill="#b04014"/><rect x="1155" y="355" width="70" height="100" fill="#c05a2e"/>
<path d="M786 545l80-50 100-40 70 10 120 20 250 30 130 0 30 20v10H786z" fill="#bcb4a4"/>
<path d="M1200 290l40-20 20 30-15 35-45-5z" fill="#d8d4cc"/><rect x="1270" y="315" width="20" height="20" fill="#2a4ea8"/>
<path d="M830 545l20-35h30l-5 35zM1210 545l30-30 55-35h30v65z" fill="#a2784a"/>
<ellipse cx="1125" cy="495" rx="95" ry="55" fill="#c4d06a"/><ellipse cx="1120" cy="490" rx="60" ry="38" fill="#dfe68a"/>
<rect x="1440" y="22" width="51" height="523" fill="#8c8a7e"/><path d="M1430 490l45 5v25h-40z" fill="#c4ae3a"/>
</g></svg>

<!-- small elevation image -->
<svg class="a" style="left:1613px;top:356px" width="148" height="91" viewBox="40 558 443 274">
<g filter="url(#bh)"><rect x="30" y="550" width="460" height="290" fill="#050505"/>
<rect x="40" y="558" width="443" height="14" fill="#555"/><rect x="345" y="560" width="130" height="6" fill="#ddd"/><rect x="40" y="558" width="10" height="10" fill="#b03030"/>
<rect x="110" y="575" width="40" height="115" fill="#7fdcf0"/><rect x="150" y="575" width="40" height="115" fill="#a5e8f4"/><rect x="190" y="575" width="30" height="115" fill="#1a78e0"/><rect x="220" y="575" width="50" height="115" fill="#8fb8d8"/><rect x="270" y="575" width="35" height="115" fill="#5e88a8"/>
<path d="M305 580l50 15 30 40-10 55h-70z" fill="#3b3b9a"/><path d="M310 590l30 70-30 0z" fill="#9a9ae0"/>
<path d="M100 660l30 20-30 0z" fill="#34349a"/>
<path d="M60 705c60-15 130-20 190-30 60 5 150 10 215 30z" fill="#18a6dc"/><path d="M60 700c50-5 90-12 120-8l30 18H60z" fill="#0f8cd0"/>
<rect x="60" y="708" width="412" height="62" fill="#5e90bc"/><rect x="60" y="718" width="412" height="6" fill="#9cc0dc"/><rect x="60" y="740" width="412" height="6" fill="#88b8d8"/><rect x="320" y="708" width="60" height="15" fill="#7a6ac0"/><rect x="360" y="730" width="14" height="40" fill="#a0e0f0"/>
<rect x="195" y="750" width="28" height="18" fill="#d86a8a"/><rect x="200" y="765" width="25" height="8" fill="#d8c050"/>
<circle cx="295" cy="765" r="7" fill="#3aa040"/><rect x="410" y="767" width="30" height="7" fill="#c8a858"/>
<rect x="40" y="770" width="443" height="30" fill="#040404"/>
<rect x="40" y="800" width="443" height="32" fill="#8e8e8e"/><rect x="40" y="815" width="443" height="17" fill="#e0e0e0"/><rect x="478" y="575" width="5" height="225" fill="#ddd"/>
<rect x="441" y="595" width="16" height="18" fill="#888"/></g></svg>

<!-- Dialog -->
<div style="left:669px;top:274px;width:580px;height:523px;box-sizing:border-box;background:#f0f0f0;border:1px solid #1c82d8"></div>
<div style="left:670px;top:275px;width:578px;height:30px;background:#fff"></div>
<div class="t" style="left:678px;top:282px;font-size:12px">Print</div>
<div class="t" style="left:1177px;top:282px;font-size:13px">?</div>
<svg class="a" style="left:1218px;top:283px" width="14" height="14" fill="none" stroke="#222" stroke-width="1.100"><path d="M1.500 1.500l10.500 10.500M12 1.500L1.500 12"/></svg>

<div class="gb" style="left:682px;top:318px;width:556px;height:134px"></div>
<div class="lg" style="left:687px;top:312px">Printer</div>
<div class="t dl" style="left:693px;top:337px"><u>N</u>ame:</div>
<div style="left:778px;top:334px;width:342px;height:21px;box-sizing:border-box;background:#e1e1e1;border:1px solid #adadad"></div>
<div class="t dl" style="left:781px;top:337px;letter-spacing:-.2px">Bluebeam PDF</div>
<svg class="a" style="left:1106px;top:341px" width="10" height="7" fill="none"><path d="M1 1l4 4 4-4" stroke="#555"/></svg>
<div class="b" style="left:1130px;top:334px;width:96px;height:22px;line-height:20px"><u>P</u>roperties...</div>
<div class="t dl" style="left:693px;top:365px">Status:</div><div class="t dl" style="left:774px;top:365px;letter-spacing:-.2px">Ready</div>
<div class="t dl" style="left:693px;top:386px">Type:</div><div class="t dl" style="left:774px;top:386px;letter-spacing:-.4px">BluebeamPSDriver</div>
<div class="t dl" style="left:693px;top:407px">Where:</div><div class="t dl" style="left:774px;top:407px;letter-spacing:-.95px">BLUEBEAMPDFPORT</div>
<div class="t dl" style="left:693px;top:428px">Comment:</div>
<div class="cb" style="left:1129px;top:418px"></div>
<div class="t dl" style="left:1145px;top:416px">Print to fi<u>l</u>e</div>

<div class="gb" style="left:682px;top:464px;width:556px;height:107px"></div>
<div class="lg" style="left:687px;top:458px">File</div>
<div class="rd on" style="left:695px;top:481px"></div>
<div class="t dl" style="left:710px;top:480px;letter-spacing:-.16px">Combine <u>m</u>ultiple selected views/sheets into a single file</div>
<div class="rd" style="left:695px;top:506px"></div>
<div class="t dl" style="left:710px;top:505px;letter-spacing:-.08px">Create separate <u>f</u>iles. View/sheet names will be appended to the specified name</div>
<div class="t dl" style="left:739px;top:541px">N<u>a</u>me:</div>
<div style="left:778px;top:539px;width:342px;height:20px;box-sizing:border-box;background:#fff;border:1px solid #888"></div>
<div class="b" style="left:1130px;top:539px;width:96px;height:21px;line-height:19px"><u>B</u>rowse...</div>

<div class="gb" style="left:682px;top:583px;width:268px;height:165px"></div>
<div class="lg" style="left:687px;top:577px">Print Range</div>
<div class="rd" style="left:695px;top:604px"></div><div class="t dl" style="left:710px;top:603px">Current <u>w</u>indow</div>
<div class="rd" style="left:695px;top:632px"></div><div class="t dl" style="left:710px;top:630px"><u>V</u>isible portion of current window</div>
<div class="rd on" style="left:695px;top:660px"></div><div class="t dl" style="left:710px;top:658px"><u>S</u>elected views/sheets</div>
<div class="b" style="left:714px;top:713px;width:87px;height:21px;background:#e5f1fb;border-color:#0078d7;line-height:20px;outline:1px dotted #111;outline-offset:-2px">Se<u>l</u>ect...</div>

<div class="gb" style="left:960px;top:583px;width:278px;height:85px"></div>
<div class="lg" style="left:967px;top:577px">Options</div>
<div class="t dl" style="left:974px;top:599px">Number of <u>c</u>opies:</div>
<div style="left:1180px;top:596px;width:47px;height:20px;box-sizing:border-box;background:#fff;border:1px solid #888;border-color:#888 #aaa #888 #888"></div>
<div class="t dl" style="left:1186px;top:598px">1</div>
<svg class="a" style="left:1209px;top:597px" width="17" height="18"><rect width="17" height="18" fill="#e8e8e8"/><path d="M.5 8.500h16" stroke="#aaa"/><path d="M5.500 6l3-3 3 3zM5.500 11l3 3 3-3z" fill="#111"/></svg>
<div class="cb" style="left:975px;top:626px"></div><div class="t dl" style="left:990px;top:624px">Reverse print or<u>d</u>er</div>
<div class="cb" style="left:975px;top:647px"></div><div class="t dl" style="left:990px;top:646px">C<u>o</u>llate</div>

<div class="gb" style="left:960px;top:681px;width:278px;height:67px"></div>
<div class="lg" style="left:967px;top:675px">Settings</div>
<div class="b" style="left:977px;top:717px;width:87px;height:22px;line-height:22px">Set<u>u</u>p...</div>

<div class="b" style="left:682px;top:764px;width:100px;height:21px;line-height:20px">Printing Tips</div>
<div class="b" style="left:791px;top:763px;width:100px;height:21px;line-height:20px">P<u>r</u>eview</div>
<div class="b" style="left:958px;top:764px;width:88px;height:21px;line-height:21px">OK</div>
<div class="b" style="left:1054px;top:764px;width:88px;height:21px;line-height:21px">Cancel</div>
<div class="b" style="left:1148px;top:764px;width:88px;height:21px;line-height:21px"><u>H</u>elp</div>

<!-- marker circle -->
<svg class="a" style="left:665px;top:560px" width="590" height="250" viewBox="0 0 1568 750" preserveAspectRatio="none">
<defs><filter id="mk" x="-5%" y="-5%" width="110%" height="110%"><feGaussianBlur stdDeviation="2.500"/></filter></defs>
<path filter="url(#mk)" fill-rule="evenodd" fill="#3c3c3c" d="M230 332L300 328L350 350L400 400L412 450L402 530L360 590L290 625L190 630L120 590L85 540L75 480L90 420L140 380L230 358ZM270 384L210 390L155 425L132 462L130 518L160 552L260 564L330 552L356 500L350 432L320 404Z"/>
<path d="M102 490C102 420 190 380 285 372C360 392 392 440 384 510C370 580 280 602 200 602C140 592 108 550 102 490Z" fill="none" stroke="#4c4c4c" stroke-width="10" filter="url(#mk)"/>
<path filter="url(#mk)" d="M228 328h34v32h-34z" fill="#6e6e6e"/>
<path filter="url(#mk)" d="M148 555c40 18 130 20 190 0M146 415c40-25 80-30 124-30M352 432c6 30 6 60 0 70" fill="none" stroke="#8e8e8e" stroke-width="5" opacity=".7"/>
</svg>

</div></body></html>
